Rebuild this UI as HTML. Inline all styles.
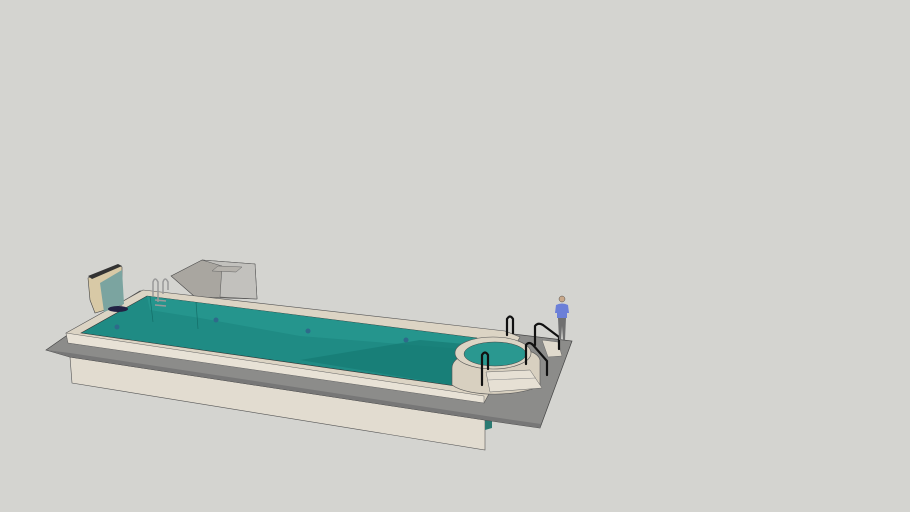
<!DOCTYPE html>
<html><head><meta charset="utf-8"><style>
html,body{margin:0;padding:0;background:#d4d4d0;width:910px;height:512px;overflow:hidden}
svg{display:block}
</style></head><body>
<svg width="910" height="512" viewBox="0 0 910 512" xmlns="http://www.w3.org/2000/svg">
<rect width="910" height="512" fill="#d4d4d0"/>
<!-- back building -->
<polygon points="171,276 202,260 255,264 257,299 195,297" fill="#a9a6a0" stroke="#444" stroke-width="0.6"/>
<polygon points="202,260 255,264 257,299 220,297 222,266" fill="#c2c1bd" stroke="#555" stroke-width="0.5"/>
<polygon points="218,266 242,267 236,272 212,271" fill="#b5b2ac" stroke="#666" stroke-width="0.5"/>
<!-- front wall -->
<polygon points="70,357 485,420 485,450 72,383" fill="#e2dcd0" stroke="#555" stroke-width="0.6"/>
<polygon points="485,420 492,420 492,428 485,430" fill="#2a7a72"/>
<!-- deck -->
<polygon points="46,350 66,336 140,291 505,333 572,341 540,428 485,420 70,357" fill="#8c8c8a" stroke="#444" stroke-width="0.7"/>
<polygon points="46,350 70,357 485,420 540,428 541,424 486,416 70,353" fill="#777"/>
<!-- coping -->
<polygon points="66,333 143,290 505,331 520,337 484,403 478,398 68,343" fill="#dcd4c4" stroke="#555" stroke-width="0.6"/>
<!-- water -->
<polygon points="81,333 147,296 477,338 470,388" fill="#1f8b84" stroke="#333" stroke-width="0.6"/>
<polygon points="147,296 477,338 476,350 300,336 200,318 150,310" fill="#289a92" opacity="0.7"/>
<polygon points="300,360 420,340 476,345 470,388" fill="#167a74" opacity="0.7"/>
<line x1="150" y1="296" x2="153" y2="322" stroke="#146e68" stroke-width="0.7"/>
<line x1="196" y1="302" x2="198" y2="329" stroke="#146e68" stroke-width="0.7"/>
<circle cx="117" cy="327" r="2.5" fill="#2e6a8a"/><circle cx="216" cy="320" r="2.5" fill="#2e6a8a"/>
<circle cx="308" cy="331" r="2.5" fill="#2e6a8a"/><circle cx="406" cy="340" r="2.5" fill="#2e6a8a"/>
<!-- front coping strip -->
<polygon points="66,333 484,396 484,403 68,343" fill="#e8e2d6" stroke="#666" stroke-width="0.5"/>
<!-- waterfall -->
<polygon points="88,278 118,265 122,267 122,305 95,313 90,300" fill="#d8c9a6" stroke="#444" stroke-width="0.6"/>
<polygon points="100,283 122,270 124,304 104,312" fill="#7ba4a0"/>
<polygon points="88,276 118,264 122,266 92,279" fill="#333"/>
<ellipse cx="118" cy="309" rx="10" ry="3" fill="#224"/>
<!-- ladder -->
<g stroke="#999" stroke-width="1.5" fill="none">
<path d="M153,296 v-14 q2,-6 5,0 v20"/><path d="M163,294 v-12 q2,-6 5,0 v8"/>
<line x1="155" y1="300" x2="166" y2="301"/><line x1="155" y1="305" x2="166" y2="306"/>
</g>
<!-- spa -->
<path d="M452,368 C452,345 535,340 540,360 L540,386 C520,396 470,398 452,385 Z" fill="#d8d0c0" stroke="#555" stroke-width="0.6"/>
<ellipse cx="493" cy="353" rx="38" ry="16" fill="#dcd4c4" stroke="#555" stroke-width="0.6"/>
<ellipse cx="495" cy="354" rx="31" ry="12" fill="#2a9890" stroke="#444" stroke-width="0.5"/>
<path d="M486,372 L530,370 L542,388 L490,392 Z" fill="#e6e0d4" stroke="#666" stroke-width="0.5"/>
<line x1="488" y1="380" x2="536" y2="378" stroke="#888" stroke-width="0.6"/>
<path d="M542,340 L558,342 L562,356 L548,357 Z" fill="#e0dacd" stroke="#666" stroke-width="0.5"/>
<!-- rails -->
<g stroke="#111" stroke-width="2.2" fill="none" stroke-linecap="round">
<path d="M507,335 v-16 q3,-5 6,0 v14"/>
<path d="M535,345 v-19 q3,-4 8,-1 l16,12 v12"/>
<path d="M526,364 v-19 q3,-4 7,0 l14,16 v14"/>
<path d="M482,385 v-30 q3,-5 6,0 v14"/>
</g>
<!-- person -->
<circle cx="562" cy="299" r="3" fill="#c9a88a" stroke="#333" stroke-width="0.4"/>
<path d="M556,305 q6,-3 12,0 l1,8 -2,0 0,5 -10,0 0,-5 -2,0 z" fill="#6b7fd8"/>
<path d="M558,318 h8 l-1,22 h-2 l-1,-14 -1,14 h-2 z" fill="#707070"/>
</svg>
</body></html>
